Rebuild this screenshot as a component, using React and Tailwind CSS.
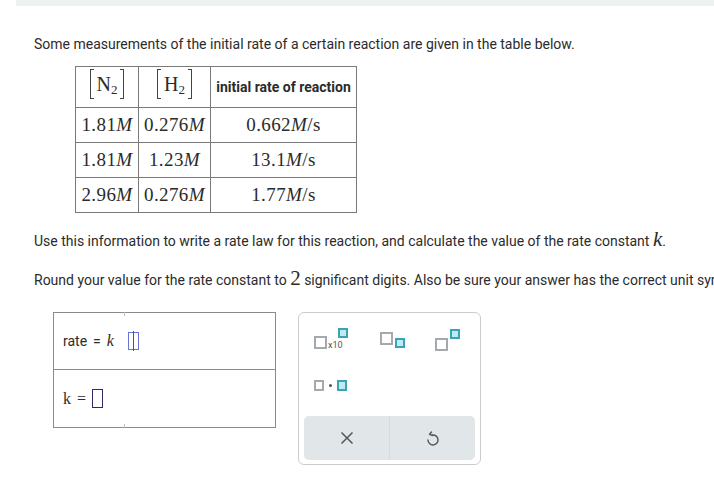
import React from "react";

const serif = { fontFamily: '"Liberation Serif", "DejaVu Serif", serif' };
const sans = { fontFamily: 'Roboto, "Liberation Sans", sans-serif' };

function Bracketed({ sym }) {
  return (
    <span className="inline-flex items-center">
      <span className="inline-block w-[4px] h-[30px] border-l border-t border-b border-[#444]" />
      <span className="px-[3px] text-[20px]">
        {sym}
        <sub className="text-[13px]">2</sub>
      </span>
      <span className="inline-block w-[4px] h-[30px] border-r border-t border-b border-[#444]" />
    </span>
  );
}

function Val({ n, unit }) {
  return (
    <span className="tracking-[0.4px]">
      {n}
      <i>M</i>
      {unit && "/s"}
    </span>
  );
}

function GraySq({ size = "w-[12px] h-[12px]" }) {
  return <span className={`block ${size} border-2 border-[#a3a9ac] bg-white`} />;
}

function TealSq({ size = "w-[10px] h-[10px]" }) {
  return <span className={`block ${size} border-2 border-[#3ba3b3] bg-[#bfeaf2]`} />;
}

export default function App() {
  const rows = [
    ["1.81", "0.276", "0.662"],
    ["1.81", "1.23", "13.1"],
    ["2.96", "0.276", "1.77"],
  ];

  return (
    <div className="w-[714px] h-[493px] overflow-hidden bg-white text-[#2b2b2b]" style={sans}>
      <div className="h-[6px] ml-[16px] bg-[#edf1f2]" />

      <div className="pl-[34px]">
        <p className="mt-[28px] text-[14px] leading-[20px] whitespace-nowrap">
          Some measurements of the initial rate of a certain reaction are given in the table below.
        </p>

        {/* data table */}
        <table className="ml-[41px] mt-[12px] border-collapse" style={serif}>
          <thead>
            <tr className="h-[41px]">
              <th className="w-[63px] border border-[#7a7a7a] font-normal">
                <Bracketed sym="N" />
              </th>
              <th className="w-[72px] border border-[#7a7a7a] font-normal">
                <Bracketed sym="H" />
              </th>
              <th className="w-[146px] border border-[#7a7a7a] text-[14px] font-bold" style={sans}>
                initial rate of reaction
              </th>
            </tr>
          </thead>
          <tbody>
            {rows.map((r, i) => (
              <tr key={i} className="h-[35px] text-[19px]">
                <td className="border border-[#7a7a7a] text-center">
                  <Val n={r[0]} />
                </td>
                <td className="border border-[#7a7a7a] text-center">
                  <Val n={r[1]} />
                </td>
                <td className="border border-[#7a7a7a] text-center">
                  <Val n={r[2]} unit />
                </td>
              </tr>
            ))}
          </tbody>
        </table>

        <p className="mt-[18px] text-[14px] leading-[20px] whitespace-nowrap">
          Use this information to write a rate law for this reaction, and calculate the value of the rate constant{" "}
          <i className="text-[21px] leading-[14px]" style={serif}>k</i>.
        </p>
        <p className="mt-[19px] text-[14px] leading-[20px] whitespace-nowrap">
          Round your value for the rate constant to <span className="text-[21px] leading-[14px]" style={serif}>2</span> significant digits. Also be sure your answer has the correct unit symbol.
        </p>
      </div>

      <div className="flex items-start mt-[22px] ml-[53px] gap-[22px]">
        {/* answer box */}
        <div className="w-[223px] border border-[#8a8a8a] relative">
          <div className="h-[57px] flex items-center pl-[9px] text-[14px] border-b border-[#8a8a8a]">
            <span>rate</span>
            <span className="mx-[6px]">=</span>
            <i className="text-[16px]" style={serif}>k</i>
            <span className="ml-[14px] inline-block w-[11px] h-[18px] border border-[#6b72d6] relative">
              <span className="absolute left-[4px] top-[-2px] w-px h-[20px] bg-[#555]" />
            </span>
          </div>
          <div className="h-[57px] flex items-center pl-[9px] text-[16px]" style={serif}>
            <span>k</span>
            <span className="mx-[6px]">=</span>
            <span className="inline-block w-[11px] h-[19px] border border-[#2a2a6a]" />
          </div>
          <span className="absolute left-[70px] top-[-1px] w-px h-[4px] bg-[#bbb]" />
          <span className="absolute left-[70px] bottom-[-1px] w-px h-[4px] bg-[#bbb]" />
        </div>

        {/* tools panel */}
        <div className="w-[183px] h-[153px] border border-[#c9cdd0] rounded-[6px] flex flex-col px-[5px] pb-[4px]">
          <div className="flex justify-between items-start pt-[15px] pl-[10px] pr-[14px] h-[50px]">
            <span className="relative inline-block w-[36px] h-[22px]">
              <span className="absolute left-0 top-[8px]"><GraySq size="w-[13px] h-[13px]" /></span>
              <span className="absolute left-[14px] top-[12px] text-[9px] leading-[10px] text-[#555]">x10</span>
              <span className="absolute left-[24px] top-0"><TealSq /></span>
            </span>
            <span className="relative inline-block w-[26px] h-[22px]">
              <span className="absolute left-0 top-[4px]"><GraySq size="w-[13px] h-[13px]" /></span>
              <span className="absolute left-[15px] top-[10px]"><TealSq /></span>
            </span>
            <span className="relative inline-block w-[26px] h-[22px]">
              <span className="absolute left-0 top-[10px]"><GraySq size="w-[13px] h-[13px]" /></span>
              <span className="absolute left-[15px] top-[1px]"><TealSq /></span>
            </span>
          </div>
          <div className="flex items-center gap-[5px] px-[10px] h-[42px] pt-[3px]">
            <GraySq size="w-[10px] h-[11px]" />
            <span className="w-[3px] h-[3px] rounded-full bg-[#555]" />
            <TealSq size="w-[10px] h-[11px]" />
          </div>
          <div className="mt-auto h-[44px] bg-[#e1e7e9] rounded-[5px] flex">
            <div className="flex-1 flex items-center justify-center border-r border-[#d6dcde]">
              <svg width="14" height="14" viewBox="0 0 14 14" fill="none" stroke="#555" strokeWidth="1.5">
                <path d="M1.5 1.5L12.5 12.5M12.5 1.5L1.5 12.5" />
              </svg>
            </div>
            <div className="flex-1 flex items-center justify-center">
              <svg width="14" height="17" viewBox="0 0 14 17" fill="none" stroke="#555" strokeWidth="1.4" strokeLinecap="round" strokeLinejoin="round">
                <path d="M6.5 5A5 5 0 1 1 2 10" />
                <path d="M5.5 2L3.5 4.3L6.5 5.5" />
              </svg>
            </div>
          </div>
        </div>
      </div>
    </div>
  );
}
